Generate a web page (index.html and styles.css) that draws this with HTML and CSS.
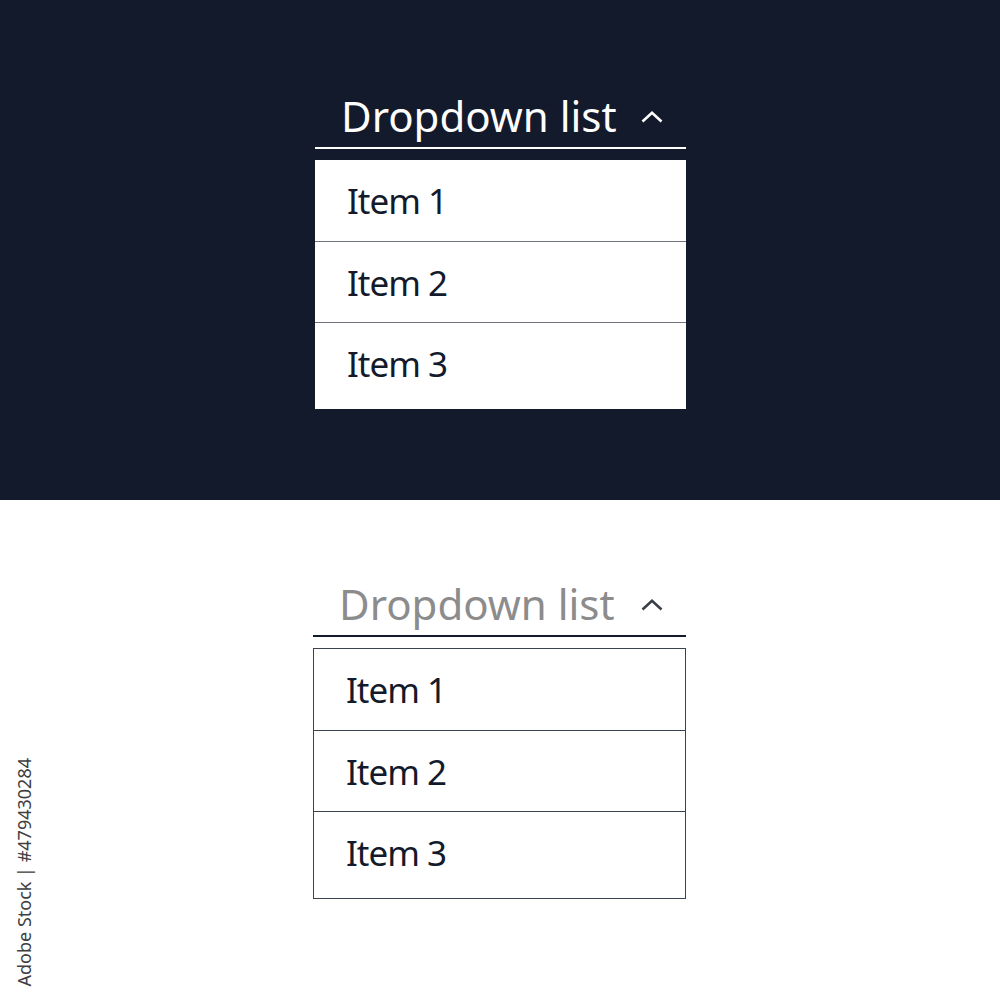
FILE: index.html
```html
<!DOCTYPE html>
<html lang="en">
<head>
    <meta charset="UTF-8">
    <meta name="viewport" content="width=device-width, initial-scale=1.0">
    <title>Dropdown list</title>
    <link rel="stylesheet" href="styles.css">
</head>
<body>
    <section class="panel panel-dark">
        <div class="dropdown">
            <div class="dropdown-head">
                <span class="dropdown-label">Dropdown list</span>
                <svg class="chevron" width="22" height="12" viewBox="0 0 22 12">
                    <path d="M1.5 10.5 L11 1.8 L20.5 10.5" fill="none" stroke="currentColor" stroke-width="2.6"/>
                </svg>
            </div>
            <ul class="dropdown-menu">
                <li>Item 1</li>
                <li>Item 2</li>
                <li>Item 3</li>
            </ul>
        </div>
    </section>

    <section class="panel panel-light">
        <div class="dropdown">
            <div class="dropdown-head">
                <span class="dropdown-label">Dropdown list</span>
                <svg class="chevron" width="22" height="12" viewBox="0 0 22 12">
                    <path d="M1.5 10.5 L11 1.8 L20.5 10.5" fill="none" stroke="currentColor" stroke-width="2.6"/>
                </svg>
            </div>
            <ul class="dropdown-menu">
                <li>Item 1</li>
                <li>Item 2</li>
                <li>Item 3</li>
            </ul>
        </div>
        <div class="stock-id">Adobe Stock | #479430284</div>
    </section>
</body>
</html>
```

FILE: styles.css
```css
body {
    margin: 0;
    font-family: "Noto Sans", "Open Sans", sans-serif;
}
.panel {
    position: relative;
    height: 500px;
    box-sizing: border-box;
}
.panel-dark {
    background-color: #131a2b;
    padding: 91px 0 0 315px;
}
.panel-light {
    background-color: #ffffff;
    padding: 79px 0 0 313px;
}
.dropdown {
    width: 371px;
}
.panel-light .dropdown {
    width: 373px;
}
.dropdown-head {
    display: flex;
    justify-content: space-between;
    align-items: center;
    padding: 0 23px 6px 26px;
    border-bottom: 2px solid #ffffff;
    color: #ffffff;
}
.panel-light .dropdown-head {
    border-bottom-color: #131a2b;
    color: #8c8c8c;
}
.dropdown-label {
    font-size: 42px;
    line-height: 50px;
}
.chevron {
    color: #ffffff;
    margin-top: 2px;
}
.panel-light .chevron {
    color: #3a3f4a;
}
.dropdown-menu {
    list-style: none;
    margin: 11px 0 0;
    padding: 0;
    background-color: #ffffff;
}
.panel-light .dropdown-menu {
    border: 1px solid #3c4350;
}
.dropdown-menu li {
    height: 80px;
    padding-left: 32px;
    font-size: 35px;
    letter-spacing: -1px;
    line-height: 82px;
    color: #131a2b;
    border-top: 1.5px solid #6f737d;
}
.dropdown-menu li:first-child {
    border-top: none;
    height: 81px;
}
.dropdown-menu li:last-child {
    height: 86px;
}
.panel-light .dropdown-menu li {
    border-top-color: #3c4350;
}
.panel-light .dropdown-menu li:first-child {
    border-top: none;
}
.stock-id {
    position: absolute;
    left: 12px;
    bottom: 14px;
    writing-mode: vertical-rl;
    transform: rotate(180deg);
    font-size: 18px;
    color: #404040;
}
```
